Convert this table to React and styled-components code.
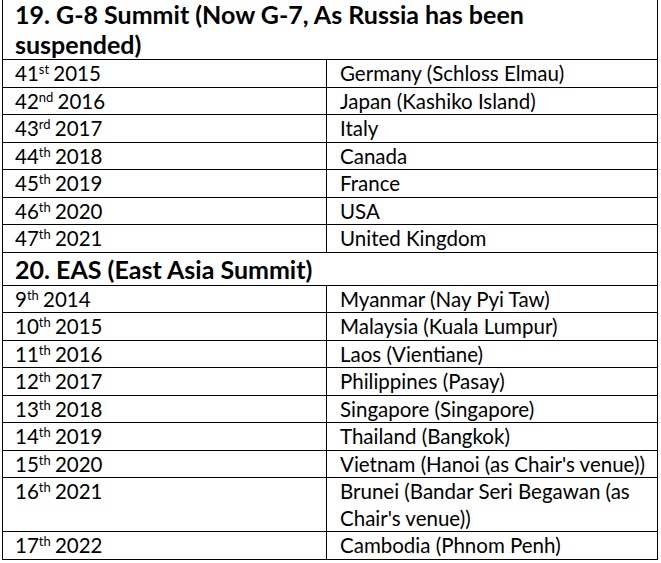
import React from 'react';
import styled, { createGlobalStyle } from 'styled-components';

const GlobalStyle = createGlobalStyle`
  html, body {
    margin: 0;
    padding: 0;
    background: #fff;
  }

  body {
    font-family: Lato, 'Open Sans', sans-serif;
    color: #000;
  }
`;

const Page = styled.div`
  padding: 0 0 0 2px;
  margin-top: -1px;
`;

const Table = styled.table`
  width: 656px;
  border-collapse: collapse;
  table-layout: fixed;
`;

const HeadCell = styled.td`
  border: 1px solid #000;
  padding: 0 ${({ right }) => right || 0}px 0 12px;
  font-weight: 700;
  font-size: 25px;
  line-height: ${({ lh }) => lh}px;
  vertical-align: top;
`;

const Cell = styled.td`
  border: 1px solid #000;
  padding: 0 0 0 ${({ pad }) => pad}px;
  font-size: 20.5px;
  line-height: 26.5px;
  vertical-align: top;
`;

const Sup = styled.sup`
  font-size: 13px;
  line-height: 0;
  vertical-align: 7px;
  margin-right: -1px;
`;

const g8 = [
  ['41', 'st', '2015', 'Germany (Schloss Elmau)'],
  ['42', 'nd', '2016', 'Japan (Kashiko Island)'],
  ['43', 'rd', '2017', 'Italy'],
  ['44', 'th', '2018', 'Canada'],
  ['45', 'th', '2019', 'France'],
  ['46', 'th', '2020', 'USA'],
  ['47', 'th', '2021', 'United Kingdom'],
];

const eas = [
  ['9', 'th', '2014', 'Myanmar (Nay Pyi Taw)'],
  ['10', 'th', '2015', 'Malaysia (Kuala Lumpur)'],
  ['11', 'th', '2016', 'Laos (Vientiane)'],
  ['12', 'th', '2017', 'Philippines (Pasay)'],
  ['13', 'th', '2018', 'Singapore (Singapore)'],
  ['14', 'th', '2019', 'Thailand (Bangkok)'],
  ['15', 'th', '2020', "Vietnam (Hanoi (as Chair's venue))"],
  ['16', 'th', '2021', "Brunei (Bandar Seri Begawan (as Chair's venue))"],
  ['17', 'th', '2022', 'Cambodia (Phnom Penh)'],
];

const Rows = ({ items }) =>
  items.map(([num, suf, year, place]) => (
    <tr key={num + year}>
      <Cell pad={12}>
        {num}
        <Sup>{suf}</Sup> {year}
      </Cell>
      <Cell pad={13}>{place}</Cell>
    </tr>
  ));

const App = () => (
  <>
    <GlobalStyle />
    <Page>
      <Table>
        <colgroup>
          <col style={{ width: '324px' }} />
          <col />
        </colgroup>
        <tbody>
          <tr>
            <HeadCell colSpan={2} lh={29.5} right={100}>
              19. G-8 Summit (Now G-7, As Russia has been suspended)
            </HeadCell>
          </tr>
          <Rows items={g8} />
          <tr>
            <HeadCell colSpan={2} lh={32}>
              20. EAS (East Asia Summit)
            </HeadCell>
          </tr>
          <Rows items={eas} />
        </tbody>
      </Table>
    </Page>
  </>
);

export default App;
